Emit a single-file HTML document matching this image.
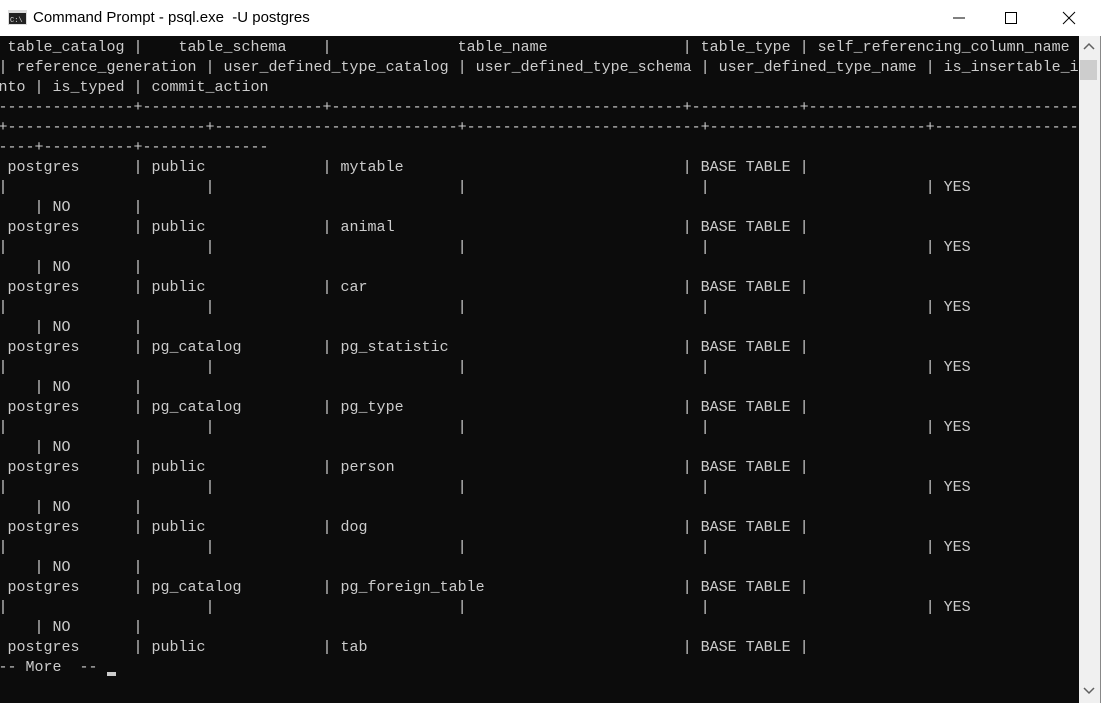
<!DOCTYPE html>
<html><head><meta charset="utf-8"><style>
html,body{margin:0;padding:0;width:1101px;height:703px;overflow:hidden;background:#fff;}
#title{position:absolute;left:0;top:0;width:1101px;height:36px;background:#fff;}
#title .t{position:absolute;left:33px;top:9px;font:15px "Liberation Sans",sans-serif;color:#000;}
#term{position:absolute;left:0;top:36px;width:1079px;height:667px;background:#0c0c0c;overflow:hidden;}
#term pre{margin:0;position:absolute;left:-1.5px;top:2px;font:15px/20px "Liberation Mono",monospace;color:#cccccc;white-space:pre;}
#sb{position:absolute;left:1079px;top:36px;width:21px;height:667px;background:#f0f0f0;border-right:1px solid #888;}
#thumb{position:absolute;left:1px;top:24px;width:17px;height:20px;background:#cdcdcd;}
#cur{position:absolute;left:107px;top:672px;width:9px;height:4px;background:#ccc;}
</style></head><body>
<div id="title">
<svg style="position:absolute;left:8px;top:10px" width="19" height="15"><rect x="0" y="0" width="19" height="15" fill="#ddd"/><rect x="1" y="3" width="17" height="11" fill="#222"/><text x="2" y="12" font-size="7" font-family="Liberation Mono" fill="#ddd">C:\</text></svg>
<div class="t">Command Prompt - psql.exe&nbsp; -U postgres</div>
<svg style="position:absolute;left:950px;top:10px" width="130" height="16"><line x1="3" y1="8" x2="15" y2="8" stroke="#000" stroke-width="1"/><rect x="55.5" y="2.5" width="11" height="11" fill="none" stroke="#000"/><line x1="113" y1="2" x2="125" y2="14" stroke="#000"/><line x1="125" y1="2" x2="113" y2="14" stroke="#000"/></svg>
</div>
<div id="term"><pre> table_catalog |    table_schema    |              table_name               | table_type | self_referencing_column_name 
| reference_generation | user_defined_type_catalog | user_defined_type_schema | user_defined_type_name | is_insertable_i
nto | is_typed | commit_action
---------------+--------------------+---------------------------------------+------------+------------------------------
+----------------------+---------------------------+--------------------------+------------------------+----------------
----+----------+--------------
 postgres      | public             | mytable                               | BASE TABLE |
|                      |                           |                          |                        | YES
    | NO       |
 postgres      | public             | animal                                | BASE TABLE |
|                      |                           |                          |                        | YES
    | NO       |
 postgres      | public             | car                                   | BASE TABLE |
|                      |                           |                          |                        | YES
    | NO       |
 postgres      | pg_catalog         | pg_statistic                          | BASE TABLE |
|                      |                           |                          |                        | YES
    | NO       |
 postgres      | pg_catalog         | pg_type                               | BASE TABLE |
|                      |                           |                          |                        | YES
    | NO       |
 postgres      | public             | person                                | BASE TABLE |
|                      |                           |                          |                        | YES
    | NO       |
 postgres      | public             | dog                                   | BASE TABLE |
|                      |                           |                          |                        | YES
    | NO       |
 postgres      | pg_catalog         | pg_foreign_table                      | BASE TABLE |
|                      |                           |                          |                        | YES
    | NO       |
 postgres      | public             | tab                                   | BASE TABLE |
-- More  --</pre></div>
<div id="cur"></div>
<div id="sb"><div id="thumb"></div>
<svg style="position:absolute;left:4px;top:6px" width="12" height="8"><polyline points="1,7 6,2 11,7" fill="none" stroke="#606060" stroke-width="1.5"/></svg>
<svg style="position:absolute;left:4px;top:651px" width="12" height="8"><polyline points="1,1 6,6 11,1" fill="none" stroke="#606060" stroke-width="1.5"/></svg>
</div>
</body></html>
